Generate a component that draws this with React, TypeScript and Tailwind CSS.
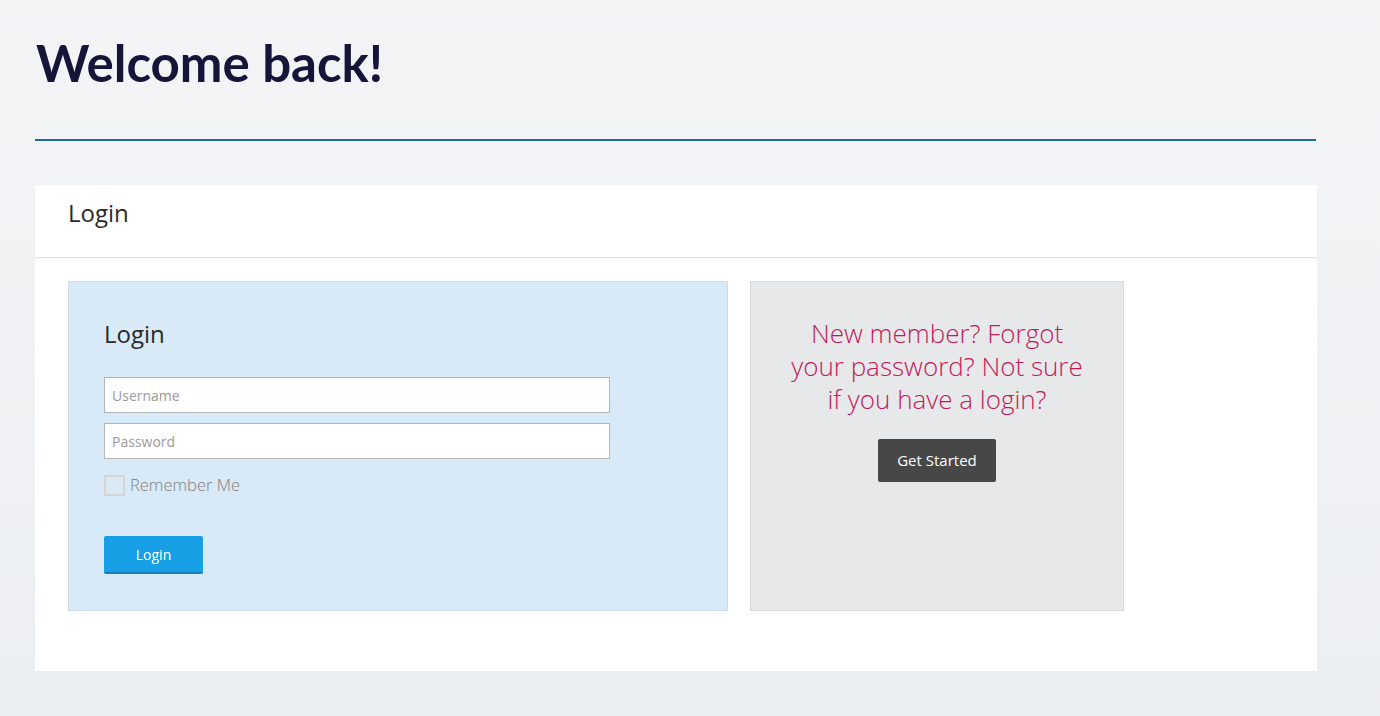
import React from "react";

export default function App() {
  return (
    <div className="min-h-[716px] w-full bg-gradient-to-b from-[#f3f4f6] to-[#eceff2] pt-[27px]" style={{ fontFamily: '"Open Sans", sans-serif' }}>
      <div className="ml-[35px] w-[1282px]">
        <h1 className="pl-[1px] text-[51px] font-bold leading-[72px] text-[#15153a]" style={{ fontFamily: 'Lato, "Open Sans", sans-serif' }}>
          Welcome back!
        </h1>
        <div className="mt-[40px] h-[2px] w-[1281px] bg-[#1b6b9f]" />
        <div className="mt-[44px] bg-white">
          <div className="h-[73px] border-b border-[#e3e3e3] px-[33px] pt-[12px] shadow-[0_1px_2px_rgba(0,0,0,0.04)]">
            <h2 className="text-[24px] leading-[32px] text-[#2a2a2a]">Login</h2>
          </div>
          <div className="flex gap-[22px] px-[33px] pt-[23px] pb-[60px]">
            <div className="h-[330px] w-[660px] border border-[#cddbe8] bg-[#d8e9f7] pl-[35px] pt-[36px]">
              <h3 className="text-[24px] leading-[32px] text-[#2a2a2a]">Login</h3>
              <div className="mt-[27px] flex flex-col gap-[10px]">
                <input
                  placeholder="Username"
                  className="h-[36px] w-[506px] border border-[#b5b5b5] bg-white px-[7px] text-[14px] text-[#333] placeholder:text-[#9a9a9a] outline-none"
                />
                <input
                  placeholder="Password"
                  className="h-[36px] w-[506px] border border-[#b5b5b5] bg-white px-[7px] text-[14px] text-[#333] placeholder:text-[#9a9a9a] outline-none"
                />
              </div>
              <label className="mt-[15px] flex items-center gap-[5px]">
                <span className="h-[21px] w-[21px] border-2 border-[#d5d5d5] bg-[#dbe9f5]" />
                <span className="text-[16.5px] font-light leading-[22px] text-[#7f7f7f]">Remember Me</span>
              </label>
              <button className="mt-[40px] h-[38px] w-[99px] rounded-[2px] border-b-2 border-[#1281bd] bg-[#17a0e6] text-[14px] text-white">
                Login
              </button>
            </div>
            <div className="flex h-[330px] w-[374px] flex-col items-center border border-[#d9d9d9] bg-[#e7e8ea] pt-[35px]">
              <p className="w-[302px] text-center text-[26px] font-light leading-[33px] text-[#c41a5c]">
                New member? Forgot your password? Not sure if you have a login?
              </p>
              <button className="mt-[23px] h-[43px] w-[118px] rounded-[2px] bg-[#474747] text-[15px] text-white">
                Get Started
              </button>
            </div>
          </div>
        </div>
      </div>
    </div>
  );
}
